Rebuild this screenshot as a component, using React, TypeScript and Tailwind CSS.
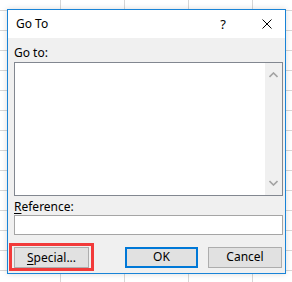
import React from "react";

const font = { fontFamily: '"Noto Sans", "Open Sans", sans-serif' };

export default function App() {
  return (
    <div
      className="w-[292px] h-[282px] overflow-hidden bg-white bg-[linear-gradient(to_right,#d6d6d6_1px,transparent_1px),linear-gradient(to_bottom,#d6d6d6_1px,transparent_1px)] bg-[size:64px_20px] bg-[position:60px_10px] pt-[9px] pl-[7px]"
      style={font}
    >
      <div className="w-[279px] h-[265px] border border-[#1883d7] bg-[#f0f0f0] flex flex-col shadow-[0_0_6px_rgba(0,0,0,0.15)]">
        {/* Title bar */}
        <div className="h-[28px] bg-white flex items-center text-[12px] text-black">
          <span className="ml-[8px] leading-none">Go To</span>
          <span className="ml-auto mr-[36px] text-[13px] leading-none">?</span>
          <svg width="10" height="10" viewBox="0 0 10 10" className="mr-[13px]">
            <path d="M0.5 0.5L9.5 9.5M9.5 0.5L0.5 9.5" stroke="#000" strokeWidth="1" />
          </svg>
        </div>
        {/* Body */}
        <div className="flex-1 pl-[6px] pr-[2px] pt-[7px] text-[12px] text-black flex flex-col">
          <div className="h-[17px] leading-[16px]">Go to:</div>
          <div className="h-[134px] border border-[#828790] bg-white flex justify-end">
            <div className="w-[17px] bg-[#f0f0f0] flex flex-col items-center justify-between py-[9px]">
              <svg width="9" height="6" viewBox="0 0 9 6">
                <path d="M0.5 5L4.5 1L8.5 5" stroke="#a3a3a3" strokeWidth="1.6" fill="none" />
              </svg>
              <svg width="9" height="6" viewBox="0 0 9 6">
                <path d="M0.5 1L4.5 5L8.5 1" stroke="#a3a3a3" strokeWidth="1.6" fill="none" />
              </svg>
            </div>
          </div>
          <div className="h-[19px] leading-[16px] pt-[3px]">
            <span className="underline underline-offset-[2px]">R</span>eference:
          </div>
          <div className="h-[20px] border border-[#a5a5a5] bg-white"></div>
          <div className="flex items-center mt-[8px]">
            <div className="ml-[-5px] border-[3px] border-[#f23a3a] pt-[1px] pb-[0px] px-[2px]">
              <button className="w-[75px] h-[21px] border border-[#adadad] bg-[#e1e1e1] text-[12px] leading-none text-black">
                <span className="underline underline-offset-[2px]">S</span>pecial...
              </button>
            </div>
            <button className="ml-[31px] w-[73px] h-[21px] border-2 border-[#0078d7] bg-[#e1e1e1] text-[12px] leading-none text-black">
              OK
            </button>
            <button className="ml-[10px] w-[74px] h-[21px] border border-[#adadad] bg-[#e1e1e1] text-[12px] leading-none text-black">
              Cancel
            </button>
          </div>
        </div>
      </div>
    </div>
  );
}
